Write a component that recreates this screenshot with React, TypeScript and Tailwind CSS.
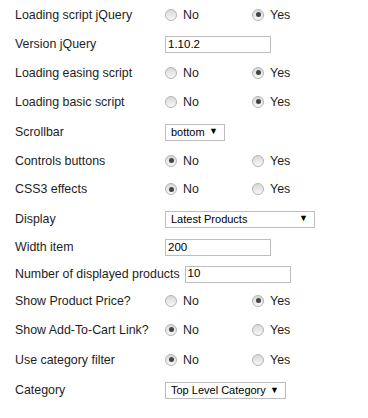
import React from "react";

type Row =
  | { kind: "radio"; label: string; value: "No" | "Yes"; h: number }
  | { kind: "input"; label: string; value: string; w: number; h: number }
  | { kind: "select"; label: string; value: string; w: number; h: number };

const rows: Row[] = [
  { kind: "radio", label: "Loading script jQuery", value: "Yes", h: 30 },
  { kind: "input", label: "Version jQuery", value: "1.10.2", w: 106, h: 29 },
  { kind: "radio", label: "Loading easing script", value: "Yes", h: 28 },
  { kind: "radio", label: "Loading basic script", value: "Yes", h: 30 },
  { kind: "select", label: "Scrollbar", value: "bottom", w: 60, h: 30 },
  { kind: "radio", label: "Controls buttons", value: "No", h: 28 },
  { kind: "radio", label: "CSS3 effects", value: "No", h: 29 },
  { kind: "select", label: "Display", value: "Latest Products", w: 150, h: 30 },
  { kind: "input", label: "Width item", value: "200", w: 106, h: 27 },
  { kind: "input", label: "Number of displayed products", value: "10", w: 106, h: 26 },
  { kind: "radio", label: "Show Product Price?", value: "Yes", h: 28 },
  { kind: "radio", label: "Show Add-To-Cart Link?", value: "No", h: 30 },
  { kind: "radio", label: "Use category filter", value: "No", h: 30 },
  { kind: "select", label: "Category", value: "Top Level Category", w: 121, h: 31 },
];

function Radio({ checked }: { checked: boolean }) {
  return (
    <span className="w-[12px] h-[12px] rounded-full border border-[#b4b4b4] bg-gradient-to-b from-[#d8d8d8] to-[#f8f8f8] flex items-center justify-center shrink-0">
      {checked && <span className="w-[5px] h-[5px] rounded-full bg-[#444]" />}
    </span>
  );
}

export default function App() {
  return (
    <div
      className="w-[368px] h-[418px] bg-white text-[12.4px] text-[#1e1e1e] pl-[15px]"
      style={{ fontFamily: '"Liberation Sans", Arial, sans-serif' }}
    >
      {rows.map((r, i) => (
        <div key={i} className="flex items-center" style={{ height: r.h }}>
          <div className="min-w-[145px] whitespace-nowrap">{r.label}</div>
          <div className="ml-[5px] flex items-center">
            {r.kind === "radio" && (
              <>
                <div className="w-[87px] flex items-center gap-[6px]">
                  <Radio checked={r.value === "No"} />
                  <span>No</span>
                </div>
                <div className="flex items-center gap-[6px]">
                  <Radio checked={r.value === "Yes"} />
                  <span>Yes</span>
                </div>
              </>
            )}
            {r.kind === "input" && (
              <div
                className="h-[17px] border border-[#bdbdbd] flex items-center pl-[2px] text-[11.5px] text-black"
                style={{ width: r.w }}
              >
                {r.value}
              </div>
            )}
            {r.kind === "select" && (
              <div
                className="h-[17px] border border-[#bdbdbd] flex items-center justify-between pl-[5px] pr-[6px] text-[11px] text-black"
                style={{ width: r.w }}
              >
                <span>{r.value}</span>
                <span className="text-[9px]">▼</span>
              </div>
            )}
          </div>
        </div>
      ))}
    </div>
  );
}
